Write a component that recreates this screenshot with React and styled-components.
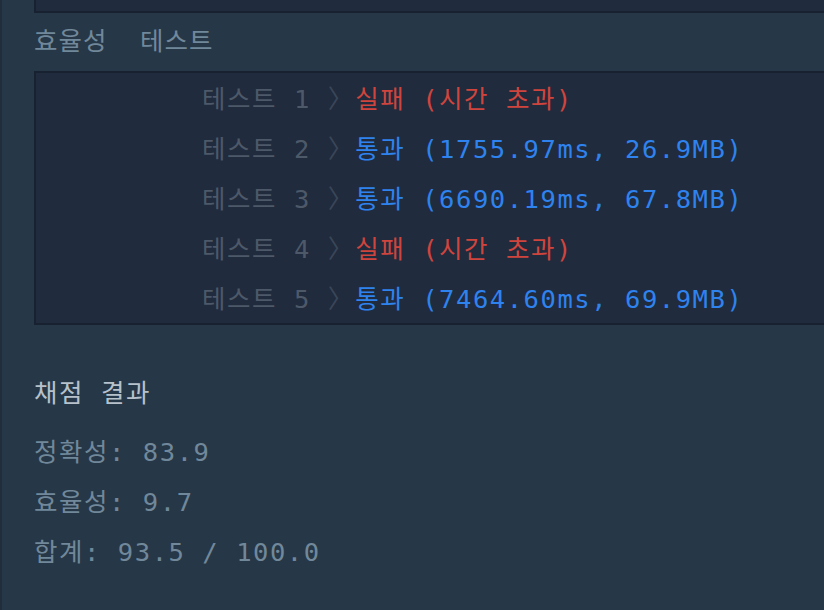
import React from 'react';
import styled, { createGlobalStyle, css } from 'styled-components';

const Global = createGlobalStyle`
  html, body {
    margin: 0;
    padding: 0;
    background: #263747;
    overflow: hidden;
  }
  body {
    font-family: "DejaVu Sans Mono", "Noto Sans CJK KR", monospace;
  }
`;

const Page = styled.div`
  width: 824px;
  height: 610px;
  box-sizing: border-box;
  border-left: 2px solid #212d3b;
  padding-left: 32px;
  overflow: hidden;
  font-size: 25.5px;
  letter-spacing: 1.55px;
  white-space: pre;
`;

const Panel = styled.div`
  width: 840px;
  box-sizing: border-box;
  background: #202b3d;
  border: 2px solid #18212f;
  ${(p) =>
    p.$clipped &&
    css`
      border-top: none;
      height: 13px;
    `}
`;

const SectionTitle = styled.div`
  color: #71889a;
  line-height: 30px;
  padding: 13px 0 15px;
  letter-spacing: 1px;
`;

const TestRow = styled.div`
  display: flex;
  align-items: center;
  box-sizing: border-box;
  height: 50px;
  padding: 0 0 3px 166px;
`;

const Label = styled.span`
  color: #4d5969;
`;

const Chevron = styled.span`
  color: #3a4658;
  letter-spacing: 2px;
`;

const Result = styled.span`
  color: ${(p) => (p.$pass ? '#2f83ee' : '#cf453d')};
`;

const ScoreHeading = styled.div`
  color: #b6c1cb;
  line-height: 40px;
  margin: 48px 0 14px;
`;

const ScoreLine = styled.div`
  color: #71889a;
  line-height: 50px;
`;

const tests = [
  { n: 1, pass: false, text: '실패 (시간 초과)' },
  { n: 2, pass: true, text: '통과 (1755.97ms, 26.9MB)' },
  { n: 3, pass: true, text: '통과 (6690.19ms, 67.8MB)' },
  { n: 4, pass: false, text: '실패 (시간 초과)' },
  { n: 5, pass: true, text: '통과 (7464.60ms, 69.9MB)' },
];

export default function App() {
  return (
    <>
      <Global />
      <Page>
        <Panel $clipped />
        <SectionTitle>효율성  테스트</SectionTitle>
        <Panel>
          {tests.map((t) => (
            <TestRow key={t.n}>
              <Label>{`테스트 ${t.n} `}</Label>
              <Chevron>〉</Chevron>
              <Result $pass={t.pass}>{t.text}</Result>
            </TestRow>
          ))}
        </Panel>
        <ScoreHeading>채점 결과</ScoreHeading>
        <ScoreLine>정확성: 83.9</ScoreLine>
        <ScoreLine>효율성: 9.7</ScoreLine>
        <ScoreLine>합계: 93.5 / 100.0</ScoreLine>
      </Page>
    </>
  );
}
